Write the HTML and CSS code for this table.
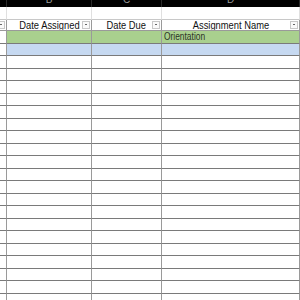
FILE: index.html
```html
<!DOCTYPE html>
<html>
<head>
<meta charset="utf-8">
<link rel="stylesheet" href="styles.css">
</head>
<body>
<div class="sheet">
  <div class="colbar">
    <div class="ch c0"></div>
    <div class="ch">B</div>
    <div class="ch">C</div>
    <div class="ch">D</div>
  </div>
  <div class="grid">
    <div class="row blank"><div class="c rh"></div><div class="c"></div><div class="c"></div><div class="c"></div></div>
    <div class="row head">
      <div class="c rh"><span class="fb fb0"></span></div>
      <div class="c hc"><span class="ht">Date Assigned</span><span class="fb"></span></div>
      <div class="c hc"><span class="ht">Date Due</span><span class="fb"></span></div>
      <div class="c hc"><span class="ht">Assignment Name</span><span class="fb"></span></div>
    </div>
    <div class="row green"><div class="c rh"></div><div class="c"></div><div class="c"></div><div class="c tc"><span class="txt">Orientation</span></div></div>
    <div class="row blue"><div class="c rh"></div><div class="c"></div><div class="c"></div><div class="c"></div></div>
    <div class="row"><div class="c rh"></div><div class="c"></div><div class="c"></div><div class="c"></div></div>
    <div class="row"><div class="c rh"></div><div class="c"></div><div class="c"></div><div class="c"></div></div>
    <div class="row"><div class="c rh"></div><div class="c"></div><div class="c"></div><div class="c"></div></div>
    <div class="row"><div class="c rh"></div><div class="c"></div><div class="c"></div><div class="c"></div></div>
    <div class="row"><div class="c rh"></div><div class="c"></div><div class="c"></div><div class="c"></div></div>
    <div class="row"><div class="c rh"></div><div class="c"></div><div class="c"></div><div class="c"></div></div>
    <div class="row"><div class="c rh"></div><div class="c"></div><div class="c"></div><div class="c"></div></div>
    <div class="row"><div class="c rh"></div><div class="c"></div><div class="c"></div><div class="c"></div></div>
    <div class="row"><div class="c rh"></div><div class="c"></div><div class="c"></div><div class="c"></div></div>
    <div class="row"><div class="c rh"></div><div class="c"></div><div class="c"></div><div class="c"></div></div>
    <div class="row"><div class="c rh"></div><div class="c"></div><div class="c"></div><div class="c"></div></div>
    <div class="row"><div class="c rh"></div><div class="c"></div><div class="c"></div><div class="c"></div></div>
    <div class="row"><div class="c rh"></div><div class="c"></div><div class="c"></div><div class="c"></div></div>
    <div class="row"><div class="c rh"></div><div class="c"></div><div class="c"></div><div class="c"></div></div>
    <div class="row"><div class="c rh"></div><div class="c"></div><div class="c"></div><div class="c"></div></div>
    <div class="row"><div class="c rh"></div><div class="c"></div><div class="c"></div><div class="c"></div></div>
    <div class="row"><div class="c rh"></div><div class="c"></div><div class="c"></div><div class="c"></div></div>
    <div class="row"><div class="c rh"></div><div class="c"></div><div class="c"></div><div class="c"></div></div>
    <div class="row"><div class="c rh"></div><div class="c"></div><div class="c"></div><div class="c"></div></div>
    <div class="row"><div class="c rh"></div><div class="c"></div><div class="c"></div><div class="c"></div></div>
  </div>
</div>
</body>
</html>
```
FILE: styles.css
```css
html, body {
  margin: 0;
  padding: 0;
  background: #fff;
}
.sheet {
  width: 300px;
  height: 300px;
  overflow: hidden;
  font-family: "Liberation Sans", Arial, sans-serif;
}
.colbar {
  display: grid;
  grid-template-columns: 7px 85px 70px 138px;
  height: 7px;
  background: #000;
  overflow: hidden;
}
.ch {
  color: #9a9a9a;
  font-size: 10px;
  line-height: 10px;
  text-align: center;
  margin-top: -5px;
  border-right: 1px solid #2a2a2a;
}
.grid {
  display: flex;
  flex-direction: column;
}
.row {
  display: grid;
  grid-template-columns: 7px 85px 70px 138px;
  height: 12.5px;
}
.row.blank {
  height: 13px;
}
.row.head {
  height: 11px;
}
.c {
  box-sizing: border-box;
  border-right: 1px solid #9a9a9a;
  border-bottom: 1px solid #7a7a7a;
  position: relative;
  overflow: hidden;
}
.rh {
  background: #fff;
}
.blank .c {
  border-right-color: #e0e0e0;
  border-bottom-color: #c8c8c8;
}
.head .c {
  border-bottom-color: #9a9a9a;
  display: flex;
  align-items: center;
  justify-content: center;
}
.ht {
  display: inline-block;
  font-size: 11px;
  line-height: 10px;
  color: #111;
  white-space: nowrap;
  transform: scaleX(0.85);
}
.fb {
  position: absolute;
  right: 1px;
  top: 1px;
  width: 6px;
  height: 6px;
  border: 1px solid #c8c8c8;
  background: #fafafa;
}
.fb::after {
  content: "";
  position: absolute;
  left: 2px;
  top: 2px;
  width: 2px;
  height: 1px;
  background: #666;
}
.green .c {
  background: #a9d08e;
}
.green .rh {
  background: #fff;
}
.blue .c {
  background: #c6d9f1;
}
.blue .rh {
  background: #fff;
}
.tc {
  display: flex;
  align-items: center;
}
.txt {
  display: block;
  font-size: 10.5px;
  line-height: 11px;
  color: #2b3325;
  margin-left: 2px;
  white-space: nowrap;
  transform: scaleX(0.8);
  transform-origin: left center;
}
```
